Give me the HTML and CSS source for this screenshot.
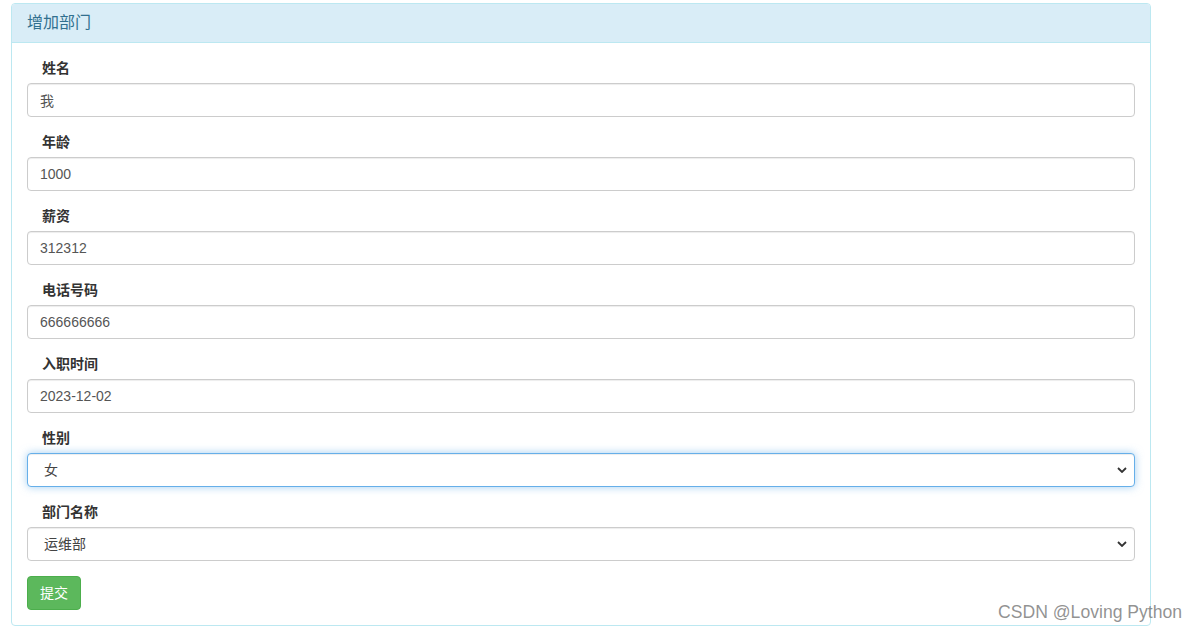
FILE: index.html
```html
<!DOCTYPE html>
<html lang="zh">
<head>
<meta charset="utf-8">
<title>增加部门</title>
<link rel="stylesheet" href="styles.css">
</head>
<body>
<div class="panel">
  <div class="panel-heading">增加部门</div>
  <div class="panel-body">
    <form class="form">
      <div class="form-group">
        <label class="label">姓名</label>
        <input class="control" type="text" value="我">
      </div>
      <div class="form-group">
        <label class="label">年龄</label>
        <input class="control" type="text" value="1000">
      </div>
      <div class="form-group">
        <label class="label">薪资</label>
        <input class="control" type="text" value="312312">
      </div>
      <div class="form-group">
        <label class="label">电话号码</label>
        <input class="control" type="text" value="666666666">
      </div>
      <div class="form-group">
        <label class="label">入职时间</label>
        <input class="control" type="text" value="2023-12-02">
      </div>
      <div class="form-group">
        <label class="label">性别</label>
        <div class="select focus"><span>女</span><svg class="caret" viewBox="0 0 10 6" width="10" height="6"><path d="M1 1 L5 5 L9 1" fill="none" stroke="#333" stroke-width="1.8"/></svg></div>
      </div>
      <div class="form-group">
        <label class="label">部门名称</label>
        <div class="select"><span>运维部</span><svg class="caret" viewBox="0 0 10 6" width="10" height="6"><path d="M1 1 L5 5 L9 1" fill="none" stroke="#333" stroke-width="1.8"/></svg></div>
      </div>
      <button class="btn" type="button">提交</button>
    </form>
  </div>
</div>
<div class="watermark">CSDN @Loving Python</div>
</body>
</html>
```
FILE: styles.css
```css
* { box-sizing: border-box; }
html, body { margin: 0; padding: 0; background: #fff; }
body {
  font-family: "Liberation Sans", Arial, "Noto Sans CJK SC", sans-serif;
  font-size: 14px;
  line-height: 20px;
  color: #333;
  padding: 3px 0 0 11px;
}
.panel {
  width: 1140px;
  border: 1px solid #bce8f1;
  border-radius: 4px;
  background: #fff;
}
.panel-heading {
  background: #d9edf7;
  color: #31708f;
  border-bottom: 1px solid #bce8f1;
  border-radius: 3px 3px 0 0;
  padding: 10px 15px;
  font-size: 16px;
  line-height: 18px;
}
.panel-body { padding: 15px; }
.form-group { margin-bottom: 15px; }
.label {
  display: block;
  font-weight: bold;
  margin-bottom: 5px;
  padding-left: 15px;
}
.control, .select {
  display: flex;
  align-items: center;
  width: 100%;
  height: 34px;
  padding: 6px 12px;
  font-family: inherit;
  font-size: 14px;
  line-height: 20px;
  color: #555;
  border: 1px solid #ccc;
  border-radius: 4px;
  background: #fff;
  box-shadow: inset 0 1px 1px rgba(0,0,0,.075);
}
.select { justify-content: space-between; padding: 6px 6px 6px 16px; color: #444; }
.select.focus {
  border-color: #66afe9;
  box-shadow: inset 0 1px 1px rgba(0,0,0,.075), 0 0 8px rgba(102,175,233,.6);
}
.caret { margin-right: 1px; }
.btn {
  display: block;
  height: 34px;
  padding: 6px 12px;
  font-family: inherit;
  font-size: 14px;
  line-height: 20px;
  color: #fff;
  background: #5cb85c;
  border: 1px solid #4cae4c;
  border-radius: 4px;
}
.watermark {
  position: absolute;
  left: 998px;
  top: 601px;
  font-size: 17.6px;
  line-height: 22px;
  color: rgba(110,110,110,.75);
}
```
